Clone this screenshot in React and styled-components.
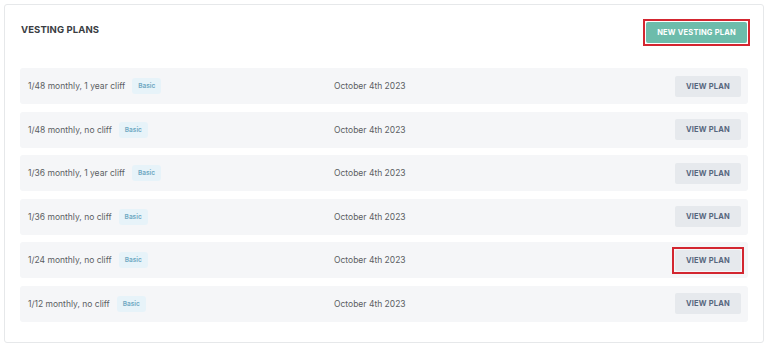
import React from "react";
import styled, { createGlobalStyle } from "styled-components";

const Global = createGlobalStyle`
  html, body { margin: 0; padding: 0; background: #ffffff; }
  body { font-family: Inter, "Noto Sans", "Liberation Sans", sans-serif; }
  * { box-sizing: border-box; }
`;

const Page = styled.div`
  width: 768px;
  height: 348px;
  padding: 4px 4px 5px 4px;
`;

const Card = styled.div`
  height: 339px;
  border: 1px solid #e6e8ea;
  border-radius: 3px;
  background: #fff;
  padding: 14px 15px 0 15px;
  display: flex;
  flex-direction: column;
`;

const Header = styled.div`
  display: flex;
  align-items: center;
  justify-content: space-between;
  height: 27px;
  margin-bottom: 22px;
`;

const Title = styled.h2`
  margin: 0 0 0 1px;
  font-size: 9.5px;
  font-weight: 700;
  color: #3a3d42;
  letter-spacing: 0.1px;
  transform: translateY(-3px);
`;

const Highlight = styled.div`
  border: 2px solid #d32630;
  padding: 1px;
  display: inline-flex;
  margin-right: -2px;
`;

const PrimaryButton = styled.button`
  border: none;
  background: #6dbcab;
  color: #fff;
  font-family: inherit;
  font-size: 7.5px;
  font-weight: 700;
  letter-spacing: 0.2px;
  height: 21px;
  width: 101px;
  border-radius: 2px;
  padding: 0;
`;

const List = styled.div`
  display: flex;
  flex-direction: column;
  gap: 7.5px;
`;

const Row = styled.div`
  height: 36px;
  background: #f5f6f8;
  border-radius: 3px;
  display: flex;
  align-items: center;
  padding: 0 7px 0 8px;
`;

const NameCell = styled.div`
  width: 306px;
  display: flex;
  align-items: center;
  gap: 7px;
`;

const Name = styled.span`
  font-size: 8.5px;
  color: #5b5e63;
`;

const Badge = styled.span`
  background: #e7f3f9;
  color: #6ea8c2;
  font-size: 6.5px;
  font-weight: 600;
  padding: 4px 6px;
  border-radius: 3px;
`;

const DateCell = styled.div`
  flex: 1;
  font-size: 8.5px;
  color: #5b5e63;
`;

const ViewWrap = styled.div`
  display: inline-flex;
  border: 2px solid ${(p) => (p.$highlight ? "#d32630" : "transparent")};
  padding: 1px;
  margin-right: -3px;
`;

const ViewButton = styled.button`
  border: none;
  background: #e6e9ed;
  color: #56677d;
  font-family: inherit;
  font-size: 7.5px;
  font-weight: 700;
  letter-spacing: 0.2px;
  width: 66px;
  height: 21px;
  border-radius: 2px;
  padding: 0;
`;

const plans = [
  "1/48 monthly, 1 year cliff",
  "1/48 monthly, no cliff",
  "1/36 monthly, 1 year cliff",
  "1/36 monthly, no cliff",
  "1/24 monthly, no cliff",
  "1/12 monthly, no cliff",
];

export default function App() {
  return (
    <>
      <Global />
      <Page>
        <Card>
          <Header>
            <Title>VESTING PLANS</Title>
            <Highlight>
              <PrimaryButton>NEW VESTING PLAN</PrimaryButton>
            </Highlight>
          </Header>
          <List>
            {plans.map((p, i) => (
              <Row key={p}>
                <NameCell>
                  <Name>{p}</Name>
                  <Badge>Basic</Badge>
                </NameCell>
                <DateCell>October 4th 2023</DateCell>
                <ViewWrap $highlight={i === 4}>
                  <ViewButton>VIEW PLAN</ViewButton>
                </ViewWrap>
              </Row>
            ))}
          </List>
        </Card>
      </Page>
    </>
  );
}
